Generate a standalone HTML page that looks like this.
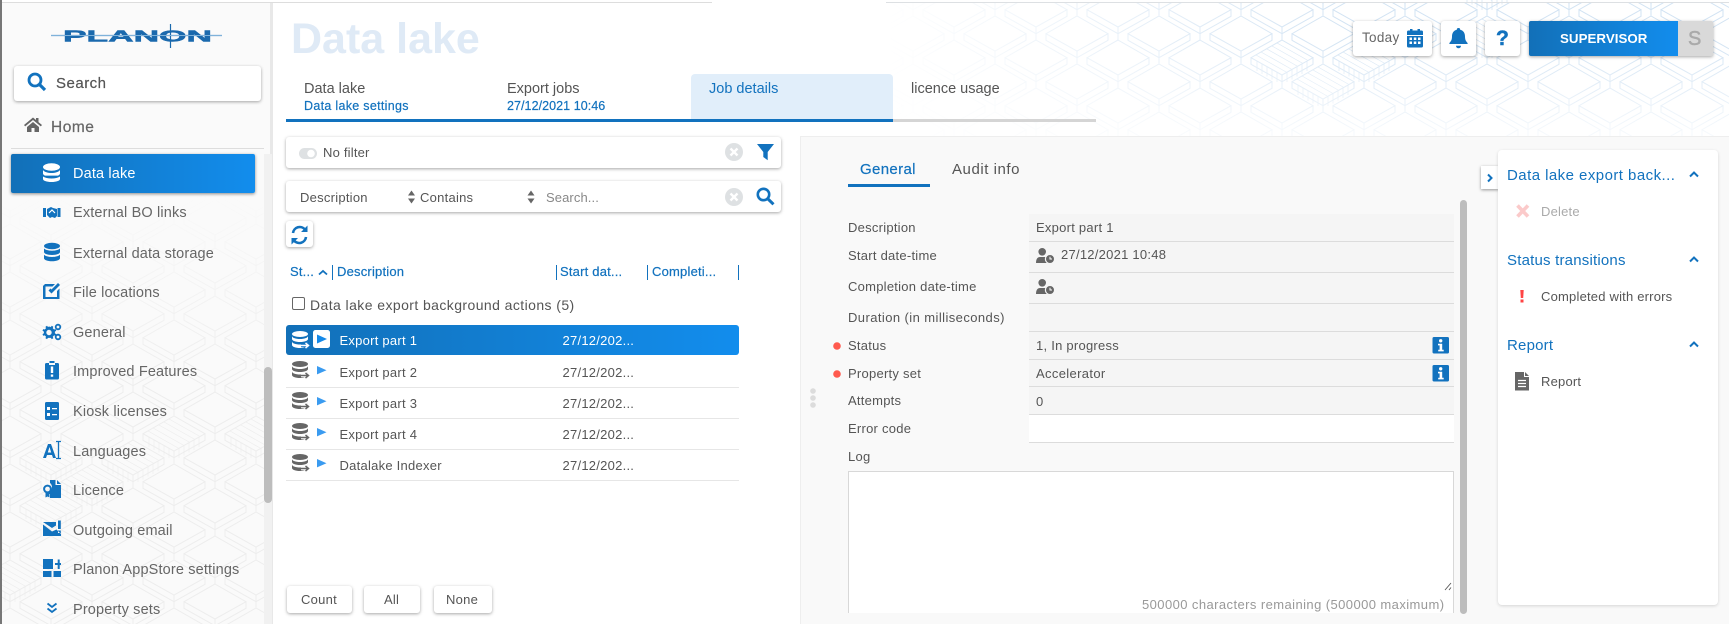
<!DOCTYPE html>
<html><head><meta charset="utf-8"><title>Data lake</title>
<style>
*{box-sizing:border-box}
html,body{margin:0;padding:0;width:1729px;height:624px;overflow:hidden;background:#fff;font-family:"Liberation Sans",sans-serif}
#r{position:relative;width:1729px;height:624px;overflow:hidden}
.a{position:absolute}
.t{position:absolute;white-space:nowrap;line-height:20px;height:20px}
.s{font-size:14.5px;letter-spacing:.15px;color:#666;left:73px}
.card{position:absolute;background:#fff;border-radius:3px;box-shadow:0 1px 3px rgba(0,0,0,.35)}
.hd{font-size:13px;letter-spacing:.2px;color:#1272be;-webkit-text-stroke:.2px #1272be}
.rw{font-size:13px;letter-spacing:.25px;color:#555}
.lb{font-size:13px;letter-spacing:.25px;color:#555;left:848px}
.val{font-size:13px;letter-spacing:.25px;color:#555;left:1036px}
.fld{position:absolute;left:1029px;width:425px;background:#f5f5f5;border-bottom:1px solid #dcdcdc}
.sep{position:absolute;left:286px;width:453px;height:1px;background:#e6e6e6}
.blue{background:linear-gradient(90deg,#1270b8,#128ded)}
.ph{font-size:15px;letter-spacing:.2px;color:#1272be;left:1507px}
.pi{font-size:13px;letter-spacing:.2px;color:#555;left:1541px}
</style></head><body><div id="r">

<!-- header pattern -->
<svg class="a" style="left:0;top:0" width="1729" height="140">
<defs>
<g id="cube"><path d="M0 0L31 17.7L0 35L-31 17.7Z M-31 17.7V24.3L0 41.7L31 24.3V17.7 M0 35V48" fill="none"/></g>
<g id="hat" fill="none" stroke-width=".7"><path d="M-5 3L26 20.5M-10 6L21 23.5M-15.5 8.75L15.5 26.25M-21 12L10 29.5M-26 15L5 32.5M5 32V42M10 29.5V39.5M15 26.5V36.5M20 24V34M25 21V31M-5 32V42M-10 29.5V39.5M-15 26.5V36.5M-20 24V34M-25 21V31"/></g>
<pattern id="pb" patternUnits="userSpaceOnUse" x="52" y="16" width="82" height="48"><g stroke="#d2e3f3" stroke-width="1">
<use href="#cube" x="41" y="0"/><use href="#cube" x="41" y="-48"/><use href="#cube" x="0" y="24"/><use href="#cube" x="82" y="24"/><use href="#cube" x="0" y="-24"/><use href="#cube" x="82" y="-24"/></g></pattern>
<pattern id="pg" patternUnits="userSpaceOnUse" x="51" y="32" width="82" height="48"><g stroke="#ededed" stroke-width="1">
<use href="#cube" x="41" y="0"/><use href="#cube" x="41" y="-48"/><use href="#cube" x="0" y="24"/><use href="#cube" x="82" y="24"/><use href="#cube" x="0" y="-24"/><use href="#cube" x="82" y="-24"/></g></pattern>
<linearGradient id="fx" x1="0" x2="1" y1="0" y2="0"><stop offset="0" stop-color="#fff"/><stop offset="1" stop-color="#fff" stop-opacity="0"/></linearGradient>
<linearGradient id="fy" x1="0" x2="0" y1="0" y2="1"><stop offset="0" stop-color="#fff" stop-opacity="0"/><stop offset="1" stop-color="#fff" stop-opacity=".85"/></linearGradient>
</defs>
<rect x="886" y="3" width="843" height="137" fill="url(#pb)"/>
<g stroke="#d2e3f3"><use href="#hat" x="1282" y="40"/><use href="#hat" x="1323" y="64"/><use href="#hat" x="1364" y="40"/><use href="#hat" x="1487" y="16"/><use href="#hat" x="1487" y="-32"/></g>
<rect x="886" y="3" width="460" height="137" fill="url(#fx)"/>
<rect x="886" y="40" width="843" height="100" fill="url(#fy)"/>
</svg>

<!-- top lines & sidebar -->
<div class="a" style="left:0;top:2px;width:712px;height:1px;background:#ddd"></div>
<div class="a" style="left:886px;top:2px;width:843px;height:1px;background:#dde0e3"></div>
<div class="a" style="left:2px;top:3px;width:268px;height:621px;background:#fafafa"></div>
<svg class="a" style="left:0;top:0" width="270" height="624">
<defs><linearGradient id="fs" x1="0" x2="0" y1="0" y2="1"><stop offset="0" stop-color="#fafafa"/><stop offset="1" stop-color="#fafafa" stop-opacity="0"/></linearGradient></defs>
<rect x="2" y="190" width="268" height="434" fill="url(#pg)"/>
<g stroke="#ededed"><use href="#hat" x="256" y="416"/><use href="#hat" x="174" y="416"/><use href="#hat" x="133" y="440"/><use href="#hat" x="92" y="464"/><use href="#hat" x="51" y="440"/><use href="#hat" x="51" y="488"/><use href="#hat" x="10" y="560"/></g>
<rect x="2" y="190" width="268" height="190" fill="url(#fs)"/>
</svg>
<div class="a" style="left:0;top:0;width:2px;height:624px;background:#777"></div>
<div class="a" style="left:270px;top:3px;width:3px;height:621px;background:#e8e8e8"></div>
<div class="a" style="left:264px;top:154px;width:8px;height:470px;background:#f1f1f1"></div>
<div class="a" style="left:264px;top:367px;width:8px;height:136px;background:#bdbdbd;border-radius:4px"></div>

<div class="card" style="left:14px;top:66px;width:247px;height:35px"></div>
<div class="t" style="left:56px;top:74px;font-size:15px;letter-spacing:.5px;color:#555;-webkit-text-stroke:.2px #555">Search</div>
<div class="t" style="left:51px;top:118px;font-size:15.5px;letter-spacing:.5px;color:#666;-webkit-text-stroke:.2px #666">Home</div>
<div class="a" style="left:11px;top:148px;width:253px;height:1px;background:#ddd"></div>
<div class="a blue" style="left:11px;top:154px;width:244px;height:39px;border-radius:2px;box-shadow:0 1px 3px rgba(0,0,0,.45)"></div>
<div class="t" style="left:73px;top:164px;font-size:14.5px;letter-spacing:.15px;color:#fff">Data lake</div>
<div class="t s" style="top:203px">External BO links</div>
<div class="t s" style="top:244px">External data storage</div>
<div class="t s" style="top:283px">File locations</div>
<div class="t s" style="top:323px">General</div>
<div class="t s" style="top:362px">Improved Features</div>
<div class="t s" style="top:402px">Kiosk licenses</div>
<div class="t s" style="top:442px">Languages</div>
<div class="t s" style="top:481px">Licence</div>
<div class="t s" style="top:521px">Outgoing email</div>
<div class="t s" style="top:560px">Planon AppStore settings</div>
<div class="t s" style="top:600px">Property sets</div>

<!-- title + tabs -->
<div class="t" style="left:291px;top:14px;height:50px;line-height:50px;font-size:43px;font-weight:bold;color:#dfeaf6">Data lake</div>
<div class="a" style="left:691px;top:74px;width:202px;height:45px;background:#e1eefa;border-radius:4px 4px 0 0"></div>
<div class="a" style="left:286px;top:119px;width:607px;height:3px;background:#1272be"></div>
<div class="a" style="left:893px;top:119px;width:203px;height:3px;background:#d5d5d5"></div>
<div class="t" style="left:304px;top:79px;font-size:14.5px;color:#555">Data lake</div>
<div class="t hd" style="left:304px;top:96px;font-size:12.5px;letter-spacing:.3px">Data lake settings</div>
<div class="t" style="left:507px;top:79px;font-size:14.5px;color:#555">Export jobs</div>
<div class="t hd" style="left:507px;top:96px;font-size:12.5px;letter-spacing:.06px">27/12/2021 10:46</div>
<div class="t" style="left:709px;top:79px;font-size:14.5px;color:#1272be">Job details</div>
<div class="t" style="left:911px;top:79px;font-size:14.5px;color:#555">licence usage</div>

<!-- top right -->
<div class="card" style="left:1353px;top:21px;width:79px;height:35px"></div>
<div class="t" style="left:1362px;top:28px;font-size:13.5px;letter-spacing:.3px;color:#666">Today</div>
<div class="card" style="left:1441px;top:21px;width:35px;height:35px"></div>
<div class="card" style="left:1485px;top:21px;width:35px;height:35px"></div>
<div class="t" style="left:1496px;top:25px;height:28px;line-height:28px;font-size:21px;font-weight:bold;color:#1272be;-webkit-text-stroke:.5px #1272be">?</div>
<div class="a" style="left:1529px;top:21px;width:184px;height:35px;border-radius:2px;background:#d9d9d9;box-shadow:0 1px 3px rgba(0,0,0,.35)"></div>
<div class="a blue" style="left:1529px;top:21px;width:149px;height:35px;border-radius:2px 0 0 2px"></div>
<div class="t" style="left:1560px;top:29px;font-size:13.3px;font-weight:bold;letter-spacing:.05px;color:#fff">SUPERVISOR</div>
<div class="t" style="left:1688px;top:27px;height:24px;line-height:24px;font-size:20px;color:#aaa;-webkit-text-stroke:.5px #aaa">S</div>

<!-- list column -->
<div class="card" style="left:286px;top:137px;width:495px;height:31px"></div>
<div class="t" style="left:323px;top:143px;font-size:13px;letter-spacing:.2px;color:#555">No filter</div>
<div class="card" style="left:286px;top:181px;width:495px;height:31px"></div>
<div class="t" style="left:300px;top:188px;font-size:13px;letter-spacing:.25px;color:#555">Description</div>
<div class="t" style="left:420px;top:188px;font-size:13px;letter-spacing:.25px;color:#555">Contains</div>
<div class="t" style="left:546px;top:188px;font-size:13px;letter-spacing:.1px;color:#888">Search...</div>
<div class="card" style="left:286px;top:221px;width:27px;height:26px"></div>

<div class="t hd" style="left:290px;top:262px">St...</div>
<div class="t hd" style="left:337px;top:262px">Description</div>
<div class="t hd" style="left:560px;top:262px">Start dat...</div>
<div class="t hd" style="left:652px;top:262px">Completi...</div>
<div class="a" style="left:332px;top:265px;width:1px;height:15px;background:#1272be"></div>
<div class="a" style="left:556px;top:265px;width:1px;height:15px;background:#1272be"></div>
<div class="a" style="left:647px;top:265px;width:1px;height:15px;background:#1272be"></div>
<div class="a" style="left:738px;top:265px;width:1px;height:15px;background:#1272be"></div>

<div class="a" style="left:292px;top:297px;width:13px;height:13px;border:1px solid #666;border-radius:2px;background:#fff"></div>
<div class="t" style="left:310px;top:294.500px;font-size:14px;letter-spacing:.42px;color:#555">Data lake export background actions (5)</div>

<div class="a blue" style="left:286px;top:325px;width:453px;height:30px;border-radius:3px"></div>
<div class="t rw" style="left:339.500px;top:331px;color:#fff">Export part 1</div>
<div class="t rw" style="left:562.500px;top:331px;color:#fff">27/12/202...</div>
<div class="t rw" style="left:339.500px;top:363px">Export part 2</div>
<div class="t rw" style="left:562.500px;top:363px">27/12/202...</div>
<div class="sep" style="top:387px"></div>
<div class="t rw" style="left:339.500px;top:394px">Export part 3</div>
<div class="t rw" style="left:562.500px;top:394px">27/12/202...</div>
<div class="sep" style="top:418px"></div>
<div class="t rw" style="left:339.500px;top:425px">Export part 4</div>
<div class="t rw" style="left:562.500px;top:425px">27/12/202...</div>
<div class="sep" style="top:449px"></div>
<div class="t rw" style="left:339.500px;top:456px">Datalake Indexer</div>
<div class="t rw" style="left:562.500px;top:456px">27/12/202...</div>
<div class="sep" style="top:480px"></div>

<div class="card" style="left:287px;top:586px;width:65px;height:27px"></div>
<div class="t rw" style="left:301px;top:590px">Count</div>
<div class="card" style="left:364px;top:586px;width:56px;height:27px"></div>
<div class="t rw" style="left:384px;top:590px">All</div>
<div class="card" style="left:434px;top:586px;width:58px;height:27px"></div>
<div class="t rw" style="left:446px;top:590px">None</div>

<!-- detail panel -->
<div class="a" style="left:800px;top:136px;width:929px;height:488px;background:#f9f9f9;border-top:1px solid #eee;border-left:1px solid #eee"></div>
<div class="t" style="left:860px;top:160px;font-size:15px;letter-spacing:.35px;color:#1272be;-webkit-text-stroke:.2px #1272be">General</div>
<div class="t" style="left:952px;top:160px;font-size:15px;letter-spacing:.55px;color:#555">Audit info</div>
<div class="a" style="left:848px;top:184px;width:82px;height:3px;background:#1272be"></div>
<div class="a" style="left:1460px;top:200px;width:7px;height:414px;background:#bdbdbd;border-radius:4px"></div>

<div class="fld" style="top:214px;height:28px"></div>
<div class="fld" style="top:242px;height:31px"></div>
<div class="fld" style="top:273px;height:31px"></div>
<div class="fld" style="top:304px;height:28px"></div>
<div class="fld" style="top:332px;height:28px"></div>
<div class="fld" style="top:360px;height:27px"></div>
<div class="fld" style="top:387px;height:28px"></div>
<div class="fld" style="top:415px;height:28px;background:#fff"></div>

<div class="t lb" style="top:218px">Description</div>
<div class="t val" style="top:218px">Export part 1</div>
<div class="t lb" style="top:246px">Start date-time</div>
<div class="t" style="left:1061px;top:245px;font-size:13px;letter-spacing:.25px;color:#555">27/12/2021 10:48</div>
<div class="t lb" style="top:277px">Completion date-time</div>
<div class="t lb" style="top:308px;letter-spacing:.42px">Duration (in milliseconds)</div>
<div class="t lb" style="top:336px">Status</div>
<div class="t val" style="top:336px">1, In progress</div>
<div class="t lb" style="top:364px">Property set</div>
<div class="t val" style="top:364px;letter-spacing:.35px">Accelerator</div>
<div class="t lb" style="top:391px">Attempts</div>
<div class="t val" style="top:392px">0</div>
<div class="t lb" style="top:419px">Error code</div>
<div class="t lb" style="top:447px">Log</div>
<div class="a" style="left:848px;top:471px;width:606px;height:142px;background:#fff;border:1px solid #d8d8d8;border-bottom:none"></div>
<div class="t" style="left:1142px;top:595px;font-size:13px;letter-spacing:.42px;color:#999">500000 characters remaining (500000 maximum)</div>

<!-- right panel -->
<div class="a" style="left:1481px;top:166px;width:18px;height:23px;background:#fff;box-shadow:0 1px 3px rgba(0,0,0,.4)"></div>
<div class="a" style="left:1498px;top:150px;width:220px;height:455px;background:#fff;border-radius:4px;box-shadow:0 1px 3px rgba(0,0,0,.15)"></div>
<div class="t ph" style="top:166px;letter-spacing:.45px">Data lake export back...</div>
<div class="t pi" style="top:201.500px;color:#aaa">Delete</div>
<div class="t ph" style="top:251px">Status transitions</div>
<div class="t pi" style="top:286.500px">Completed with errors</div>
<div class="t ph" style="top:336px">Report</div>
<div class="t pi" style="top:371.500px">Report</div>

<!-- icons overlay -->
<svg class="a" style="left:0;top:0" width="1729" height="624">
<defs>
<g id="dbx">
<ellipse cx="8" cy="3" rx="8" ry="3" fill="currentColor"/>
<path d="M0 5v3c0 1.7 3.6 3 8 3s8-1.3 8-3V5c0 1.7-3.6 3-8 3S0 6.7 0 5zM0 10.5v3.5c0 1.7 3.6 3 8 3s8-1.3 8-3v-3.5c0 1.7-3.6 3-8 3s-8-1.3-8-3z" fill="currentColor"/>
<path d="M9 14.5h7M13.5 11.5l3.5 3-3.5 3" fill="none" stroke="var(--b)" stroke-width="3.4"/>
<path d="M9 14.5h7M13.5 12l3 2.5-3 2.5" fill="none" stroke="currentColor" stroke-width="1.5"/>
</g>
<g id="pc">
<circle cx="6.2" cy="3.8" r="3.8" fill="#666"/>
<path d="M0 15c0-4 1.5-6 4-6h4.5c2.5 0 4 2 4 6z" fill="#666"/>
<circle cx="14" cy="11" r="4.6" fill="#666" stroke="#f5f5f5" stroke-width="1.2"/>
<path d="M14 8.8V11h2" stroke="#fff" stroke-width="1" fill="none"/>
</g>
<g id="clr"><circle r="9" fill="#dee1e3"/><path d="M-3.5-3.5L3.5 3.5M3.5-3.5L-3.5 3.5" stroke="#fff" stroke-width="2.4"/></g>
<g id="ud" fill="#666"><path d="M0-1.5L3.5-6.5 7-1.5zM0 1.5L3.5 6.5 7 1.5z"/></g>
<g id="play"><path d="M0 0L9.5 4.2 0 8.4z" fill="#3a9bf0"/></g>
<g id="info"><rect width="16.5" height="16.5" rx="1.5" fill="#1272be"/><circle cx="8.2" cy="3.8" r="1.7" fill="#fff"/><path d="M5.5 6.8h4.2v6h1.5v1.6H5.7v-1.6h1.4V8.4H5.500z" fill="#fff"/></g>
<g id="up"><path d="M-4 2.5L0-1.5 4 2.5" fill="none" stroke="#1272be" stroke-width="2"/></g>
</defs>

<!-- logo -->
<g>
<path d="M51 35.5H222" stroke="#4a90c8" stroke-width="1.2"/>
<path d="M170.5 24V48" stroke="#1a69ad" stroke-width="1.2"/>
<text x="63" y="41.5" font-family="Liberation Sans" font-weight="bold" font-size="16" fill="#1a69ad" stroke="#1a69ad" stroke-width=".5" textLength="149" lengthAdjust="spacingAndGlyphs">PLANON</text>
<path d="M51 35.5H222" stroke="#7fb2da" stroke-width=".9"/>
</g>

<!-- sidebar search + home -->
<g fill="none" stroke="#1272be"><circle cx="35" cy="80" r="6" stroke-width="2.8"/><path d="M39.5 84.5L45 90" stroke-width="3.2"/></g>
<path d="M33 117.5L24 125l1.2 1.4L33 120l7.8 6.4 1.2-1.4-3.5-2.9V118h-2.5v2zM27 127l6-5 6 5v5h-4.5v-4h-3v4H27z" fill="#666"/>

<!-- sidebar icons -->
<g fill="#fff"><ellipse cx="51.5" cy="167" rx="8.5" ry="3.8"/><path d="M43 170v3.5c0 1 1 1.6 2 2.1h13c1-.5 2-1.1 2-2.1V170c-1.3 2-5 3-8.5 3s-7.2-1-8.5-3z"/><path d="M43 176.5V179c0 1.8 3.8 3 8.5 3s8.5-1.2 8.5-3v-2.5c-2 1.4-5 2-8.5 2s-6.500-.6-8.500-2z"/></g>
<g fill="#1272be">
<path d="M43 208h3v9h-3zM57.500 208h3v9h-3zM47 209l4-2 2 1 4 1v7l-2 2-3-1-2 1-3-3-0-6z"/><path d="M49 213l3-3 3 3" stroke="#fff" stroke-width="1.2" fill="none"/>
<ellipse cx="52" cy="246" rx="8" ry="3.200"/><path d="M44 248.500v3.500c0 1.700 3.600 3 8 3s8-1.300 8-3v-3.500c-1.600 1.500-4.600 2.200-8 2.200s-6.400-.7-8-2.200zM44 254.800v3.500c0 1.700 3.600 3 8 3s8-1.300 8-3v-3.500c-1.600 1.500-4.600 2.200-8 2.200s-6.400-.7-8-2.200z"/>
<path d="M45 284h10l-2.500 2.500H45.500v10.500H57v-6l2.500-2.500V299H43V286z" />
<path d="M48.500 290.500l3 3L60 285l-2-2-6.500 6.500-1-1z"/>
<path d="M49 326.500l1.800.5 1-1.200 1.500.9-.5 1.600 1.300 1.200 1.500-.4.700 1.600-1.400.9v1.700l1.400.9-.7 1.600-1.500-.4-1.300 1.200.5 1.600-1.500.9-1-1.200H48l-1 1.200-1.500-.9.500-1.600-1.300-1.200-1.500.4-.7-1.600 1.400-.9v-1.700l-1.400-.9.700-1.600 1.500.4 1.300-1.200-.5-1.600 1.500-.9 1 1.200zM49 329.800a2.700 2.700 0 100 5.400 2.700 2.700 0 000-5.400z" fill-rule="evenodd"/>
<circle cx="58" cy="327" r="2.300" fill="none" stroke="#1272be" stroke-width="1.800"/><circle cx="58" cy="337" r="2.300" fill="none" stroke="#1272be" stroke-width="1.800"/>
<path d="M49.500 363h5v-2h-5zM46.500 363H49v2h6v-2h2.500a1.500 1.500 0 011.500 1.500V378a1.500 1.500 0 01-1.500 1.500h-11A1.500 1.500 0 0145 378v-13.500a1.500 1.500 0 011.500-1.500z"/>
<path d="M50.800 366.500h2.400v6.500h-2.400zM50.800 374.500h2.400v2.300h-2.400z" fill="#fff"/>
<rect x="45" y="402" width="14" height="18" rx="1.500"/>
<path d="M47 407h3v3h-3zM52 408h5v1.200h-5zM47 413h3v3h-3zM52 414h5v1.200h-5z" fill="#fff"/>
<path d="M43 458l5-14h3l5 14h-3l-1-3h-5l-1 3zM47.800 452.500h3.400L49.500 447z"/>
<path d="M56 441.500h5M58.500 441.500v17M56 458.500h5" stroke="#1272be" stroke-width="1.300" fill="none"/>
<path d="M50 480h5.500v5H61v13H50v-4h-1l1-3a5 5 0 000-8zM57 480l4 4h-4z"/>
<circle cx="47.500" cy="489" r="3.400" fill="none" stroke="#1272be" stroke-width="2"/><path d="M45.500 492.500h4v5l-2-1-2 1z"/>
<path d="M43 522l9 6 4-2.500v-3.500H43zM43 524.500V536h18v-2l-4.500-4.500-4.500 2-9-7zM58 520.500h2.800v8.500H58zM58 530.500h2.800v2.500H58z"/>
<path d="M43 559h10v10H43zM43 571h8.500v6H43zM53.500 571H61v6h-7.500zM55 563h2.700v-3.500h2v3.500H61v2h-1.300V569h-2v-4H55z"/>
</g>
<g fill="none" stroke="#1272be" stroke-width="1.800"><path d="M47.500 603.500L52 607l4.500-3.500M47.500 608.500L52 612l4.500-3.500"/></g>

<!-- top right icons -->
<g fill="#1272be">
<path d="M1407 32a1.500 1.500 0 011.500-1.500h1.500V29h2.500v1.500h5V29h2.500v1.500h1.500a1.500 1.500 0 011.500 1.500v3h-16z"/>
<path d="M1407 36h16v10a1.500 1.500 0 01-1.500 1.500h-13a1.500 1.500 0 01-1.500-1.500z"/>
<path d="M1409.500 37.500h2.500v2.500h-2.500zM1413.800 37.500h2.500v2.500h-2.500zM1418 37.500h2.500v2.500H1418zM1409.500 41.500h2.500V44h-2.500zM1413.800 41.500h2.500V44h-2.500zM1418 41.500h2.500V44H1418z" fill="#fff"/>
<path d="M1458.500 28a1.700 1.700 0 011.700 1.700c3.300.8 4.800 3.300 4.800 6.800 0 3.800 1.300 5 2.600 6.500v1h-18.200v-1c1.300-1.500 2.600-2.700 2.600-6.500 0-3.500 1.500-6 4.800-6.800a1.700 1.700 0 011.700-1.700zM1456 45.800h5a2.500 2.500 0 01-5 0z"/>
</g>

<!-- filter bar -->
<rect x="299" y="148" width="18" height="11" rx="5.500" fill="#dee1e3"/><circle cx="311" cy="153.500" r="3.800" fill="#fff"/>
<use href="#clr" x="734" y="152"/>
<path d="M757 144h17l-6.300 8v8.300l-4.400-3.300v-5z" fill="#1272be"/>
<use href="#ud" x="408" y="197"/><use href="#ud" x="527.500" y="197"/>
<use href="#clr" x="734" y="197"/>
<g fill="none" stroke="#1272be"><circle cx="763.500" cy="194.500" r="5.700" stroke-width="2.600"/><path d="M767.500 198.500L773.500 204.300" stroke-width="3"/></g>
<g fill="none" stroke="#1272be" stroke-width="2.600"><path d="M293 233a6.800 6.800 0 0112-3.500M306 237a6.800 6.800 0 01-12 3.500"/></g>
<path d="M307.500 225.500V232h-6.500zM291.500 244.500V238h6.500z" fill="#1272be"/>
<path d="M319 274.500l4-3.500 4 3.500" fill="none" stroke="#1272be" stroke-width="1.800"/>

<!-- row icons -->
<use href="#dbx" x="292" y="331" style="color:#fff;--b:#1275c4"/>
<rect x="313" y="330" width="17" height="18" rx="2.500" fill="#fff"/>
<path d="M317 334.500L327 339l-10 4.500z" fill="#1589e8"/>
<g style="color:#666;--b:#fff">
<use href="#dbx" x="292" y="361"/><use href="#dbx" x="292" y="392"/><use href="#dbx" x="292" y="423"/><use href="#dbx" x="292" y="454"/>
</g>
<use href="#play" x="317" y="366"/><use href="#play" x="317" y="397"/><use href="#play" x="317" y="428"/><use href="#play" x="317" y="459"/>

<!-- detail icons -->
<use href="#pc" x="1036" y="248"/><use href="#pc" x="1036" y="279"/>
<circle cx="837" cy="346" r="3.800" fill="#ff5a4e"/><circle cx="837" cy="374" r="3.800" fill="#ff5a4e"/>
<use href="#info" x="1432.500" y="337"/><use href="#info" x="1432.500" y="365"/>
<g fill="#dcdcdc"><circle cx="813" cy="391" r="2.800"/><circle cx="813" cy="398" r="2.800"/><circle cx="813" cy="405" r="2.800"/></g>
<path d="M1445 590L1451 583M1449 590L1451 587.500" stroke="#555" stroke-width=".9"/>

<!-- right panel icons -->
<path d="M1488 174.500l3.500 3.500-3.500 3.500" fill="none" stroke="#1272be" stroke-width="2"/>
<use href="#up" x="1694" y="174"/><use href="#up" x="1694" y="259"/><use href="#up" x="1694" y="344"/>
<path d="M1517.500 205.500l10.500 11M1528 205.500l-10.500 11" stroke="#fbcaca" stroke-width="3.600"/>
<path d="M1520.300 290h3.400l-.5 8h-2.400zM1520.500 299.500h3v3h-3z" fill="#f44"/>
<path d="M1515 372h9v5h5v13.500h-14zM1525 372l4 4h-4z" fill="#666"/>
<path d="M1518 380.500h8M1518 383.500h8M1518 386.500h8" stroke="#fff" stroke-width="1.200"/>
</svg>
</div></body></html>
